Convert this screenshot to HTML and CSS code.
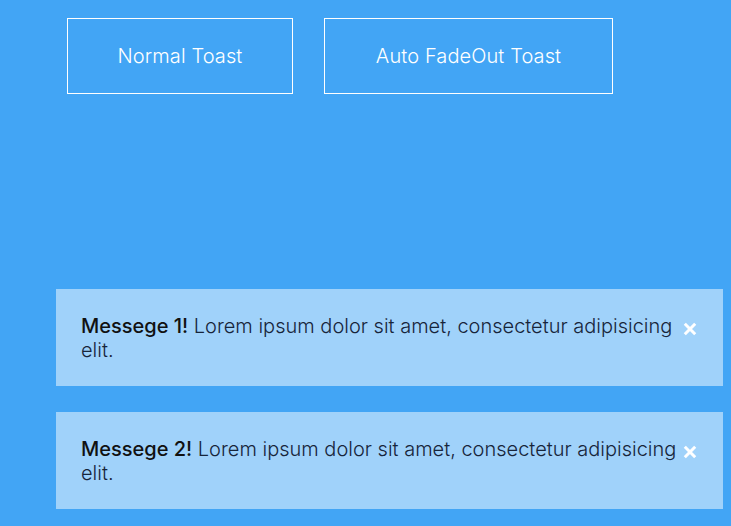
FILE: index.html
```html
<!DOCTYPE html>
<html>
<head>
<meta charset="utf-8">
<link rel="stylesheet" href="styles.css">
</head>
<body>
<div class="buttons">
  <button class="btn btn-normal">Normal Toast</button>
  <button class="btn btn-fade">Auto FadeOut Toast</button>
</div>
<div class="toasts">
  <div class="toast">
    <p class="toast-text"><strong>Messege 1!</strong> Lorem ipsum dolor sit amet, consectetur adipisicing elit.</p>
    <span class="toast-close">
      <svg width="14" height="14" viewBox="0 0 14 14"><path d="M1.8 1.8 L12.2 12.2 M12.2 1.8 L1.8 12.2" stroke="#fff" stroke-width="3" stroke-linecap="butt"/></svg>
    </span>
  </div>
  <div class="toast">
    <p class="toast-text"><strong>Messege 2!</strong> Lorem ipsum dolor sit amet, consectetur adipisicing elit.</p>
    <span class="toast-close">
      <svg width="14" height="14" viewBox="0 0 14 14"><path d="M1.8 1.8 L12.2 12.2 M12.2 1.8 L1.8 12.2" stroke="#fff" stroke-width="3" stroke-linecap="butt"/></svg>
    </span>
  </div>
</div>
</body>
</html>
```
FILE: styles.css
```css
html, body {
  margin: 0;
  padding: 0;
}
body {
  background: #42a5f5;
  font-family: Inter, "Liberation Sans", sans-serif;
  width: 731px;
  height: 526px;
  overflow: hidden;
}
.buttons {
  display: flex;
  gap: 31px;
  padding: 18px 0 0 67px;
}
.btn {
  background: transparent;
  border: 1px solid #fff;
  color: #fff;
  font-family: Inter, "Liberation Sans", sans-serif;
  font-weight: 300;
  font-size: 20px;
  letter-spacing: 0.1px;
  height: 76px;
  padding: 0;
}
.btn-normal { width: 226px; }
.btn-fade { width: 289px; }
.toasts {
  display: flex;
  flex-direction: column;
  gap: 26px;
  margin: 195px 8px 0 56px;
}
.toast {
  display: flex;
  align-items: flex-start;
  gap: 4px;
  background: #a0d2fa;
  padding: 25px 26px 24px 25px;
}
.toast-text {
  flex: 1;
  margin: 0;
  font-size: 20px;
  line-height: 24px;
  font-weight: 300;
  color: #17253a;
}
.toast-text strong {
  font-weight: 500;
  color: #111;
}
.toast-close {
  display: flex;
  width: 14px;
  height: 14px;
  margin-top: 8px;
}
```
